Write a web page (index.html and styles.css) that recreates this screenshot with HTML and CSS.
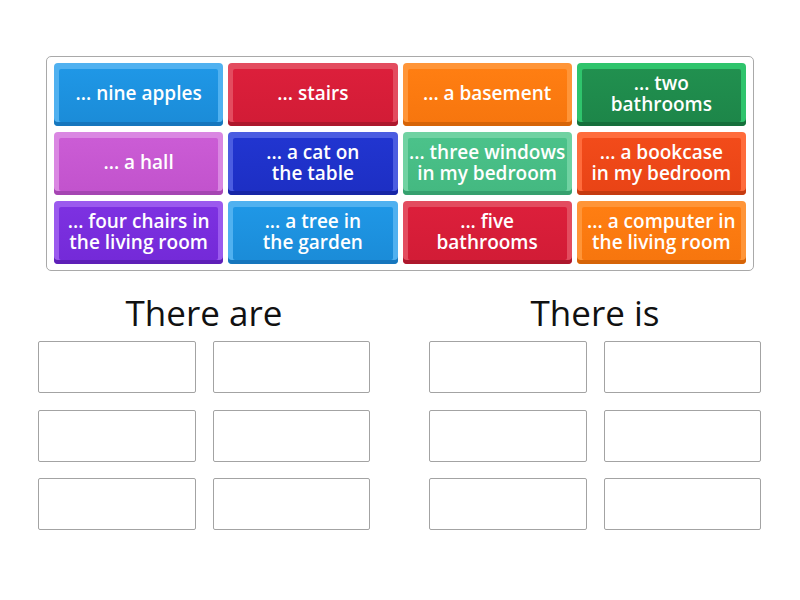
FILE: index.html
```html
<!DOCTYPE html>
<html>
<head>
<meta charset="utf-8">
<link rel="stylesheet" href="styles.css">
</head>
<body>
<div class="panel">
  <div class="tile blue"><div class="face">... nine apples</div></div>
  <div class="tile red"><div class="face">... stairs</div></div>
  <div class="tile orange"><div class="face">... a basement</div></div>
  <div class="tile green"><div class="face">... two<br>bathrooms</div></div>
  <div class="tile magenta"><div class="face">... a hall</div></div>
  <div class="tile navy"><div class="face">... a cat on<br>the table</div></div>
  <div class="tile mint"><div class="face">... three windows<br>in my bedroom</div></div>
  <div class="tile orangered"><div class="face">... a bookcase<br>in my bedroom</div></div>
  <div class="tile purple"><div class="face">... four chairs in<br>the living room</div></div>
  <div class="tile blue"><div class="face">... a tree in<br>the garden</div></div>
  <div class="tile red"><div class="face">... five<br>bathrooms</div></div>
  <div class="tile orange"><div class="face">... a computer in<br>the living room</div></div>
</div>
<div class="sorts">
  <div class="group">
    <h2 class="heading">There are</h2>
    <div class="slots">
      <div class="slot"></div><div class="slot"></div>
      <div class="slot"></div><div class="slot"></div>
      <div class="slot"></div><div class="slot"></div>
    </div>
  </div>
  <div class="group">
    <h2 class="heading">There is</h2>
    <div class="slots">
      <div class="slot"></div><div class="slot"></div>
      <div class="slot"></div><div class="slot"></div>
      <div class="slot"></div><div class="slot"></div>
    </div>
  </div>
</div>
</body>
</html>
```
FILE: styles.css
```css
html, body {
  margin: 0;
  padding: 0;
  background: #fff;
  font-family: "Open Sans", "Liberation Sans", sans-serif;
}
.panel {
  box-sizing: border-box;
  margin: 56px 0 0 46px;
  width: 708px;
  height: 215px;
  border: 1px solid #a9a9a9;
  border-radius: 5px;
  padding: 6px 7px;
  display: grid;
  grid-template-columns: repeat(4, 1fr);
  grid-template-rows: repeat(3, 63px);
  column-gap: 5px;
  row-gap: 6px;
}
.tile {
  box-sizing: border-box;
  border-radius: 4px;
  padding: 6px 5px 4px;
  display: flex;
  background: var(--edge);
  box-shadow: inset 0 -4px 0 var(--bottom);
}
.face {
  flex: 1;
  display: flex;
  align-items: center;
  justify-content: center;
  text-align: center;
  color: #fff;
  font-weight: 600;
  font-size: 19px;
  line-height: 21px;
  border-radius: 2px;
  background: linear-gradient(var(--face), var(--face2));
  padding-bottom: 4px;
  white-space: nowrap;
}
.blue { --edge: #50b1f0; --face: #1f97e6; --face2: #1b8cd8; --bottom: #1676bd; }
.red { --edge: #e34c5f; --face: #dc1f3b; --face2: #d21c36; --bottom: #ad172c; }
.orange { --edge: #ff9538; --face: #ff7e12; --face2: #f7760e; --bottom: #d66407; }
.green { --edge: #2fc46c; --face: #21904f; --face2: #1d8649; --bottom: #166f3b; }
.magenta { --edge: #da87e2; --face: #cb5cd5; --face2: #c253cd; --bottom: #a545b2; }
.navy { --edge: #4b5de1; --face: #2135d0; --face2: #1d2fc4; --bottom: #1726a6; }
.mint { --edge: #70d2a2; --face: #4bc28a; --face2: #44b981; --bottom: #36a06e; }
.orangered { --edge: #ff6c3c; --face: #f24b1a; --face2: #e94416; --bottom: #c53a10; }
.purple { --edge: #9b5aee; --face: #7d31e1; --face2: #742ad8; --bottom: #5e20b7; }

.sorts {
  display: flex;
  padding-left: 38px;
  gap: 59px;
  margin-top: 18px;
}
.group {
  width: 332px;
}
.heading {
  margin: 0;
  text-align: center;
  font-weight: 400;
  font-size: 35px;
  line-height: 48px;
  color: #111;
  height: 52px;
}
.slots {
  display: grid;
  grid-template-columns: 1fr 1fr;
  grid-auto-rows: 52px;
  column-gap: 17px;
  row-gap: 16.5px;
}
.slot {
  box-sizing: border-box;
  border: 1px solid #a3a3a3;
  border-radius: 2px;
  background: #fff;
}
```
